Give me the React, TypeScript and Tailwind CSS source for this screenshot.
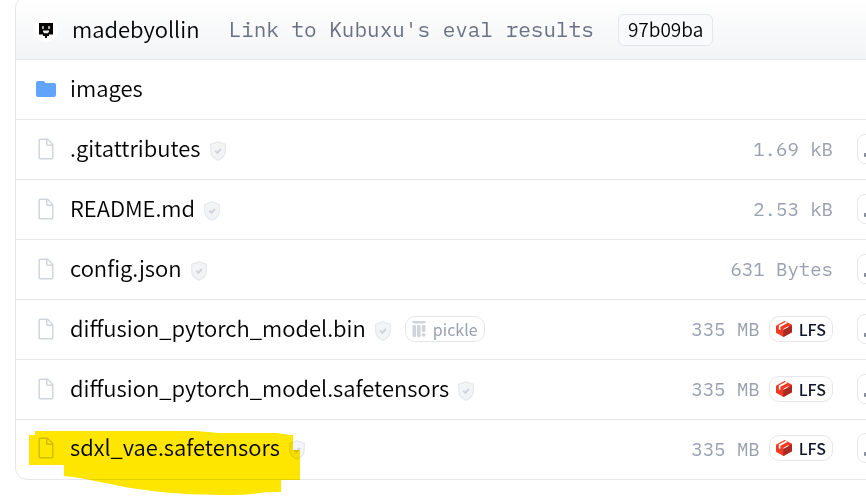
import { ReactNode } from "react"

interface RepoFile {
  name: string
  size?: string
  folder?: boolean
  pickle?: boolean
  lfs?: boolean
  marked?: boolean
}

const files: RepoFile[] = [
  { name: "images", folder: true },
  { name: ".gitattributes", size: "1.69 kB" },
  { name: "README.md", size: "2.53 kB" },
  { name: "config.json", size: "631 Bytes" },
  { name: "diffusion_pytorch_model.bin", size: "335 MB", pickle: true, lfs: true },
  { name: "diffusion_pytorch_model.safetensors", size: "335 MB", lfs: true },
  { name: "sdxl_vae.safetensors", size: "335 MB", lfs: true, marked: true },
]

function FolderIcon() {
  return (
    <svg className="size-6 shrink-0 text-[#60a5fa]" viewBox="0 0 24 24" fill="currentColor" aria-hidden="true">
      <path d="M4 4h5.2c.5 0 .9.2 1.2.6l1 1.4H20a2 2 0 0 1 2 2v10a2 2 0 0 1-2 2H4a2 2 0 0 1-2-2V6a2 2 0 0 1 2-2z" />
    </svg>
  )
}

function FileIcon() {
  return (
    <svg className="size-6 shrink-0 text-gray-300" viewBox="0 0 32 32" fill="currentColor" aria-hidden="true">
      <path d="M25.7 9.3l-7-7A.908.908 0 0 0 18 2H8a2.006 2.006 0 0 0-2 2v24a2.006 2.006 0 0 0 2 2h16a2.006 2.006 0 0 0 2-2V10a.908.908 0 0 0-.3-.7zM18 4.4l5.6 5.6H18zM24 28H8V4h8v6a2.006 2.006 0 0 0 2 2h6z" />
    </svg>
  )
}

function ShieldIcon() {
  return (
    <svg className="mt-1 h-5 w-4 shrink-0" viewBox="0 0 16 20" aria-hidden="true">
      <path
        d="M8 .8 15.3 3.2V10c0 4.3-2.8 7.5-7.3 9.2C3.5 17.5.7 14.3.7 10V3.2z"
        fill="#f3f4f6"
        stroke="#e5e7eb"
        strokeWidth="1.2"
        strokeLinejoin="round"
      />
      <path d="M5.2 9.8l2.1 2 3.7-3.8" fill="none" stroke="#d1d5db" strokeWidth="2" />
    </svg>
  )
}

function PickleIcon() {
  return (
    <svg className="h-4 w-[14px] shrink-0" viewBox="0 0 14 16" fill="#d1d5db" aria-hidden="true">
      <path d="M.5 0h13v1.2l-1 1.4h-11L.5 1.2z" />
      <rect x="0.5" y="4" width="3.6" height="12" rx="1.3" />
      <rect x="5" y="4" width="3.6" height="12" rx="1.3" />
      <rect x="9.8" y="4" width="3.6" height="7" rx="1.3" />
      <circle cx="11.6" cy="13.8" r="1.9" />
    </svg>
  )
}

function LfsIcon() {
  return (
    <svg className="size-4 shrink-0" viewBox="0 0 16 16" aria-hidden="true">
      <path d="M8.5 0L16 3.8v7.4L7.5 16 0 11.8V4.8z" fill="#f03a22" />
      <path d="M7.3 8.6L16 4.2v7L7.3 16z" fill="#a92a20" />
      <path d="M9.8.8L2.8 4.6v3.6l1.6.8V5.8l7-3.9z" fill="#fff" />
      <path d="M7.4 8.3L12.5 5.6" stroke="#fff" strokeWidth="1" />
    </svg>
  )
}

function Avatar() {
  return (
    <span className="flex size-6 shrink-0 items-center justify-center rounded-full bg-white">
      <svg className="size-4" viewBox="0 0 16 16" aria-hidden="true">
        <path d="M1 1h14v11.5h-4V14H9v2H7v-2H5v-1.5H1z" fill="#050505" />
        <path d="M4.2 4h1.5v3H4.2zM10.3 4h1.5v3h-1.5z" fill="#ddd" />
        <path d="M5 8.5h6v1.3l-1.2 1.4H6.2L5 9.8z" fill="#eee" />
      </svg>
    </span>
  )
}

function Badge({ icon, className, children }: { icon: ReactNode; className: string; children: ReactNode }) {
  return (
    <span className={`inline-flex h-[26px] items-center gap-[7px] rounded-[10px] border px-[6px] ${className}`}>
      {icon}
      <span>{children}</span>
    </span>
  )
}

// Marker stroke drawn over the row
function Marker() {
  return (
    <svg
      className="pointer-events-none absolute top-[10px] left-[13px] h-[66px] w-[272px] mix-blend-multiply"
      viewBox="0 0 272 66"
      aria-hidden="true"
    >
      <path
        d="M0 5h6V1h155c14 0 22 2 33 2h50c9 0 12 2 20 2v15h7v30h-19v12c-28 0-20 3-52 3-45 0-71-3-91-6-24-3-50-11-74-13V35H0z"
        fill="#ffe600"
      />
    </svg>
  )
}

function FileRow({ file }: { file: RepoFile }) {
  return (
    <tr className="h-[60px] border-t border-gray-200 last:h-[59px]">
      <td className="relative w-full pb-[2px] pl-[18px]">
        <div className="flex items-center">
          {file.folder ? <FolderIcon /> : <FileIcon />}
          <a href="#" className="ml-3 pb-1 text-[22px] leading-8 font-[350] text-black">
            {file.name}
          </a>
          {!file.folder && (
            <span className="ml-[9px]">
              <ShieldIcon />
            </span>
          )}
          {file.pickle && (
            <Badge icon={<PickleIcon />} className="ml-[14px] border-gray-200 text-[16px] text-gray-400">
              pickle
            </Badge>
          )}
        </div>
        {file.marked && <Marker />}
      </td>
      <td className="pb-[2px]">
        {file.size && (
          <a href="#" className="flex items-center justify-end gap-[9px] whitespace-nowrap text-gray-400">
            <span className="pt-[2px] font-['IBM_Plex_Mono','Liberation_Mono',monospace] text-[19px]">{file.size}</span>
            {file.lfs && (
              <Badge icon={<LfsIcon />} className="border-gray-200 text-[16px] font-medium text-gray-900">
                LFS
              </Badge>
            )}
          </a>
        )}
      </td>
      <td className="pr-5 pb-[2px] pl-6">
        {file.size && (
          <button
            type="button"
            aria-label={`Download ${file.name}`}
            className="flex size-[30px] items-center justify-center rounded-lg border border-gray-200 text-gray-500"
          >
            <svg className="size-4" viewBox="0 0 16 16" fill="none" stroke="currentColor" strokeWidth="1.5">
              <path d="M8 1v9M4 6.5l4 4 4-4M1 12v3h14v-3" />
            </svg>
          </button>
        )}
      </td>
    </tr>
  )
}

export default function App() {
  return (
    <main className="min-h-screen overflow-hidden bg-white font-['Source_Sans_Pro','Noto_Sans_CJK_SC',sans-serif]">
      <section className="-mt-1 -mr-[42px] ml-[15px] rounded-xl border border-gray-200">
        <header className="flex h-[62px] items-center rounded-t-xl bg-linear-to-b from-white to-gray-100 pt-1 pl-[18px] whitespace-nowrap">
          <Avatar />
          <a href="#" className="ml-[14px] pb-1 text-[22px] font-[350] text-black">
            madebyollin
          </a>
          <a
            href="#"
            className="ml-[29px] font-['IBM_Plex_Mono','Liberation_Mono',monospace] text-[21px] text-gray-500"
          >
            Link to Kubuxu's eval results
          </a>
          <a
            href="#"
            className="ml-6 flex h-8 items-center rounded-md border border-gray-200 bg-gray-50 px-[9px] pb-[2px] text-[19px] font-[350] text-black"
          >
            97b09ba
          </a>
        </header>
        <table className="w-full">
          <tbody>
            {files.map((file) => (
              <FileRow key={file.name} file={file} />
            ))}
          </tbody>
        </table>
      </section>
    </main>
  )
}
